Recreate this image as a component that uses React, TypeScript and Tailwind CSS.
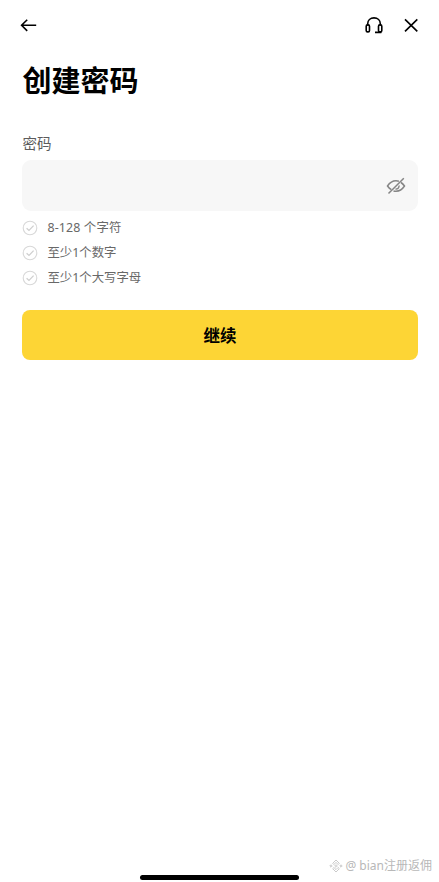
import React from "react";

const rules = [
  { text: "8-128 个字符", spacing: "tracking-[0.15px]" },
  { text: "至少1个数字", spacing: "tracking-normal" },
  { text: "至少1个大写字母", spacing: "tracking-normal" },
];

function CheckCircle() {
  return (
    <svg className="h-4 w-4 shrink-0" viewBox="0 0 16 16" fill="none" stroke="#d8d8d8" strokeWidth="1.1">
      <circle cx="8" cy="8" r="6.8" />
      <path d="M4.6 8.2 7 10.5l4.6-4.9" stroke="#cecece" strokeWidth="1.2" />
    </svg>
  );
}

export default function App() {
  return (
    <main className="flex h-[882px] w-[439px] flex-col overflow-hidden bg-white font-['Noto_Sans','Noto_Sans_CJK_SC',sans-serif] text-black">
      <header className="flex h-[50px] shrink-0 items-center pr-5 pl-5">
        <button aria-label="返回">
          <svg className="h-4 w-[17px]" viewBox="0 0 17 16" fill="none" stroke="black" strokeWidth="1.6">
            <path d="M16.2 8.3H1.8M7.2 2.7 1.6 8.3l5.6 5.6" />
          </svg>
        </button>
        <button aria-label="客服" className="ml-auto">
          <svg className="h-[18px] w-[18px]" viewBox="0 0 18 18" fill="none" stroke="black" strokeWidth="1.6">
            <path d="M2.7 9.5V7.7C2.7 4.4 5.3 1.9 9 1.9s6.3 2.5 6.3 5.8v1.8" />
            <rect x="1.2" y="8.9" width="3.3" height="7" rx="1.4" />
            <rect x="13.5" y="8.9" width="3.3" height="7" rx="1.4" />
            <path d="M15.6 15.5v.9H10" />
          </svg>
        </button>
        <button aria-label="关闭" className="ml-5">
          <svg className="h-4 w-4" viewBox="0 0 16 16" fill="none" stroke="black" strokeWidth="1.6">
            <path d="m2 2.4 12.3 12M14.3 2.4 2 14.4" />
          </svg>
        </button>
      </header>

      <section className="flex flex-col pr-[21.5px] pl-[22.4px]">
        <h1 className="mt-[9px] h-10 font-['Noto_Sans_CJK_SC',sans-serif] text-[29px] leading-10 font-bold">创建密码</h1>
        <label className="mt-[34px] h-5 font-['Noto_Sans_CJK_SC',sans-serif] text-[14.5px] leading-5 text-[#5c5c5c]">密码</label>
        <div className="mt-[7px] flex h-[51px] items-center justify-end rounded-[9px] bg-[#f7f7f7] pr-3">
          <svg className="h-5 w-5" viewBox="0 0 20 20" fill="none" stroke="#858585" strokeWidth="1.5">
            <path d="M5.4 13.7C3.8 12.8 2.5 11.5 1.5 10 3.5 7 6.2 4.8 10 4.8c1 0 2 .2 2.9.5M15 6.5c1.4.9 2.5 2.1 3.5 3.5-2 3-4.7 5.2-8.5 5.2-.9 0-1.7-.1-2.5-.3" />
            <path d="M13 9.5A3 3 0 0 1 9.5 13" />
            <path d="M17.8 2.2 2.5 17.5" />
          </svg>
        </div>
        <ul className="mt-1">
          {rules.map(({ text, spacing }) => (
            <li key={text} className="flex h-[25px] items-center gap-[9px] text-[12.4px] leading-[26px] text-[#686868]">
              <CheckCircle />
              <span className={spacing}>{text}</span>
            </li>
          ))}
        </ul>
        <button className="mt-5 h-[50px] rounded-[8px] bg-[#fdd535] font-['Noto_Sans_CJK_SC',sans-serif] text-[16.5px] font-bold">
          继续
        </button>
      </section>

      <footer className="mt-auto flex flex-col">
        <div className="flex h-[19px] items-center justify-end pr-[7px] text-[12px] leading-[19px] whitespace-nowrap text-[#b8b8b8]">
          <svg className="mr-[2px] h-[14px] w-[14px]" viewBox="0 0 14 14" fill="none" stroke="#bdbdbd" strokeWidth="0.8">
            <path d="m3.7 4.3 3.3-3.3 3.3 3.3-1.2 1.2L7 3.4 4.9 5.5zM3.7 9.7 7 13l3.3-3.3-1.2-1.2L7 10.6 4.9 8.5zM.8 7 2 5.8 3.2 7 2 8.2zM10.8 7 12 5.8 13.2 7 12 8.2zM5.7 7 7 5.7 8.3 7 7 8.3z" />
          </svg>
          <span>@ bian注册返佣</span>
        </div>
        <div className="mb-[2px] h-[5px] w-[159px] self-center rounded-full bg-black" />
      </footer>
    </main>
  );
}
